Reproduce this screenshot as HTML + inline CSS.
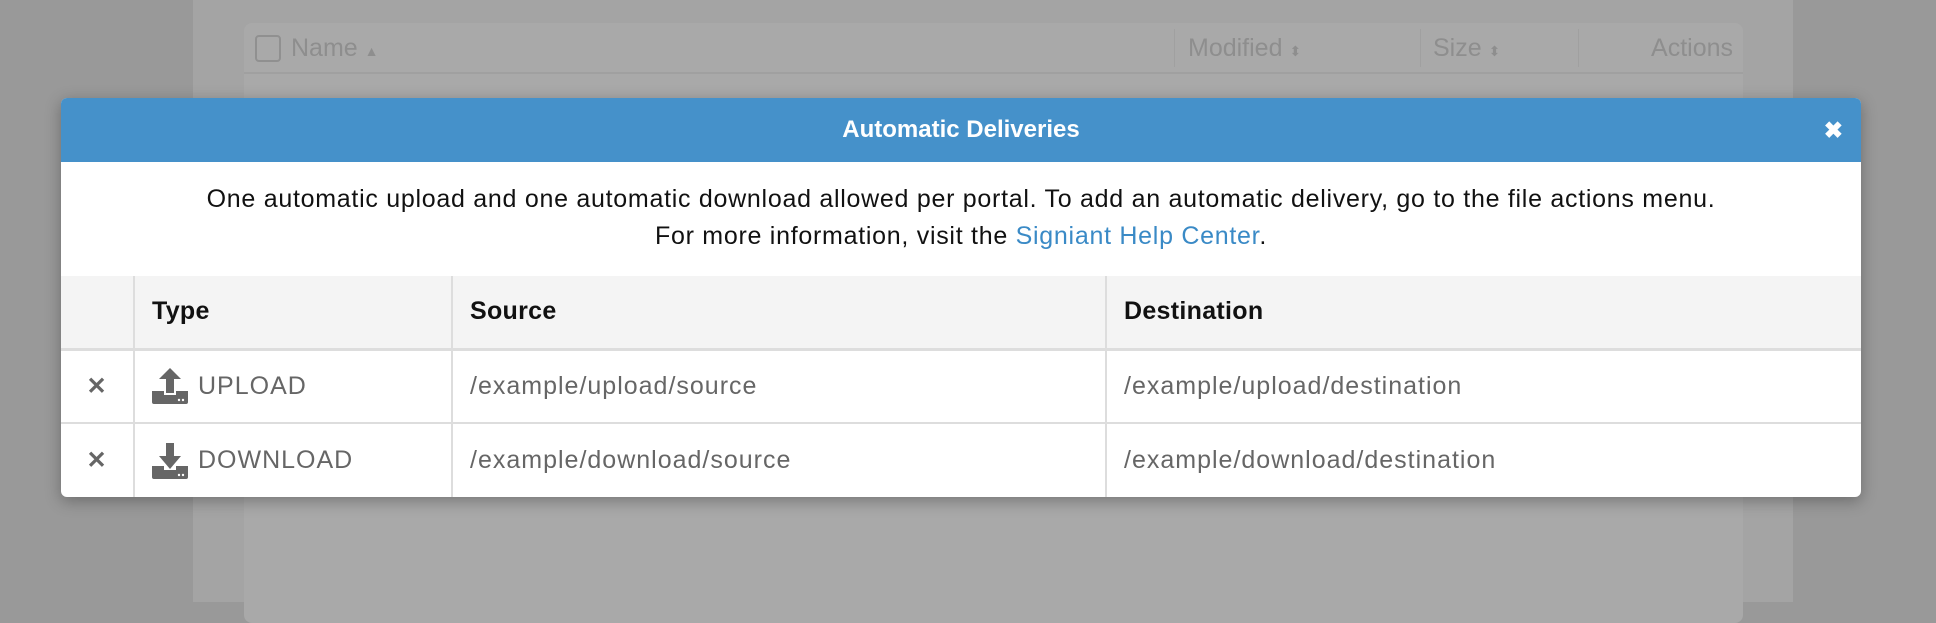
<!DOCTYPE html>
<html><head><meta charset="utf-8"><style>
*{box-sizing:border-box;margin:0;padding:0}
body{width:1936px;height:602px;overflow:hidden;background:#999;font-family:"Liberation Sans",sans-serif;position:relative}
.strip{position:absolute;left:193px;top:0;width:1600px;height:602px;background:#a4a4a4}
.card{position:absolute;left:244px;top:23px;width:1499px;height:600px;background:#a9a9a9;border-radius:8px}
.bh{position:absolute;top:0;left:0;right:0;height:51px;border-bottom:2px solid #a0a0a0;color:#8e8e8e;font-size:25px}
.bh span{position:absolute;top:11px}
.bh i{position:absolute;top:6px;width:1px;height:38px;background:#a0a0a0}
.modal{position:absolute;left:61px;top:98px;width:1800px;height:399px;background:#fff;border-radius:6px;overflow:hidden;box-shadow:0 4px 16px rgba(0,0,0,.3)}
.hd{height:64px;background:#4591ca;color:#fff;font-weight:bold;font-size:24px;text-align:center;line-height:64px;position:relative}
.hd .x{position:absolute;right:18px;top:0;font-size:23px}
.msg{text-align:center;font-size:25px;color:#111;line-height:37px;padding-top:19px;height:114px;letter-spacing:0.72px}
.msg a{color:#3a8ac6;text-decoration:none}
table{border-collapse:collapse;width:100%;font-size:25px;table-layout:fixed;letter-spacing:1px}
th{background:#f4f4f4;text-align:left;font-weight:bold;color:#111;height:73px;padding-left:17px;border-left:2px solid #ddd;border-bottom:3px solid #ddd;letter-spacing:0.3px}
td{height:74px;padding-left:17px;color:#666;border-left:2px solid #ddd;border-bottom:2px solid #ddd}
tr:last-child td{border-bottom:none}
th:first-child,td:first-child{border-left:none;padding-left:0;text-align:center}
td svg{vertical-align:middle;margin-right:10px}
.t{display:flex;align-items:center}
</style></head><body>
<div class="strip"></div>
<div class="card"><div class="bh">
<span style="left:11px;top:12px;width:26px;height:27px;border:2px solid #909090;border-radius:4px"></span>
<span style="left:47px">Name <small style="font-size:14px">▲</small></span>
<i style="left:930px"></i><span style="left:944px">Modified <small style="font-size:14px">⬍</small></span>
<i style="left:1176px"></i><span style="left:1189px">Size <small style="font-size:14px">⬍</small></span>
<i style="left:1334px"></i><span style="right:10px">Actions</span>
</div></div>
<div class="modal">
<div class="hd">Automatic Deliveries<span class="x">✖</span></div>
<div class="msg">One automatic upload and one automatic download allowed per portal. To add an automatic delivery, go to the file actions menu.<br>For more information, visit the <a>Signiant Help Center</a>.</div>
<table>
<colgroup><col style="width:73px"><col style="width:318px"><col style="width:654px"><col></colgroup>
<tr><th></th><th>Type</th><th>Source</th><th>Destination</th></tr>
<tr><td style="font-size:24px;font-weight:bold">✕</td><td><div class="t"><svg width="36" height="36" viewBox="0 0 36 36"><path d="M0 23h12v4h12v-4h12v11a2 2 0 0 1-2 2H2a2 2 0 0 1-2-2z" fill="#666"/><path d="M18 0L29 11H22V25H14V11H7Z" fill="#666"/><circle cx="27" cy="32" r="1.2" fill="#fff"/><circle cx="31" cy="32" r="1.2" fill="#fff"/></svg>UPLOAD</div></td><td>/example/upload/source</td><td>/example/upload/destination</td></tr>
<tr><td style="font-size:24px;font-weight:bold">✕</td><td><div class="t"><svg width="36" height="36" viewBox="0 0 36 36"><path d="M0 23h12v4h12v-4h12v11a2 2 0 0 1-2 2H2a2 2 0 0 1-2-2z" fill="#666"/><path d="M14 0h8v13h7L18 26 7 13h7z" fill="#666"/><circle cx="27" cy="32" r="1.2" fill="#fff"/><circle cx="31" cy="32" r="1.2" fill="#fff"/></svg>DOWNLOAD</div></td><td>/example/download/source</td><td>/example/download/destination</td></tr>
</table>
</div>
</body></html>
